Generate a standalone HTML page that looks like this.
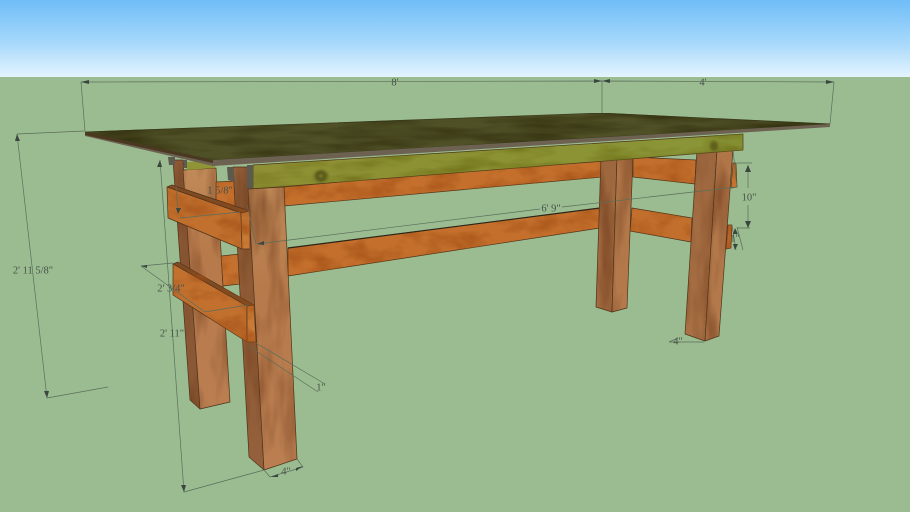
<!DOCTYPE html>
<html><head><meta charset="utf-8"><style>
html,body{margin:0;padding:0;background:#9bbd91}
svg{display:block}
text{font-family:"Liberation Serif",serif;font-size:10.5px;fill:#47524a;text-anchor:middle;dominant-baseline:middle}
.t{stroke:#4b331c;stroke-width:.7;stroke-linejoin:round}
.d{stroke:#5a6e5c;stroke-width:.7;fill:none}
.a{fill:#3a463f}
filter{color-interpolation-filters:sRGB}
</style></head><body>
<svg width="910" height="512" viewBox="0 0 910 512" xmlns="http://www.w3.org/2000/svg">
<defs>
<linearGradient id="sky" x1="0" y1="0" x2="0" y2="1"><stop offset="0" stop-color="#6fbdf8"/><stop offset=".55" stop-color="#a6d8fb"/><stop offset="1" stop-color="#e4f4fe"/></linearGradient>
<linearGradient id="lf" x1="0" y1="0" x2="0" y2="1"><stop offset="0" stop-color="#c08a58"/><stop offset=".35" stop-color="#b77a4b"/><stop offset=".7" stop-color="#b87c4e"/><stop offset="1" stop-color="#ba7e51"/></linearGradient>
<linearGradient id="ls" x1="0" y1="0" x2="0" y2="1"><stop offset="0" stop-color="#95623c"/><stop offset=".5" stop-color="#8c5934"/><stop offset="1" stop-color="#95613c"/></linearGradient>
<linearGradient id="rf" x1="0" y1="0" x2="0" y2="1"><stop offset="0" stop-color="#9c663e"/><stop offset=".5" stop-color="#a56d42"/><stop offset="1" stop-color="#a87044"/></linearGradient>
<linearGradient id="rs" x1="0" y1="0" x2="0" y2="1"><stop offset="0" stop-color="#b07648"/><stop offset="1" stop-color="#b47a4c"/></linearGradient>
<linearGradient id="ap" x1="0" y1="0" x2="1" y2="0"><stop offset="0" stop-color="#8f9035"/><stop offset=".5" stop-color="#8b9233"/><stop offset="1" stop-color="#8a9638"/></linearGradient>
<filter id="b" x="-50%" y="-50%" width="200%" height="200%"><feGaussianBlur stdDeviation="1.4"/></filter>
<filter id="soft" x="0" y="0" width="100%" height="100%"><feGaussianBlur stdDeviation=".35"/></filter>
<filter id="wv" x="-5%" y="-5%" width="110%" height="110%"><feTurbulence type="fractalNoise" baseFrequency=".05 .012" numOctaves="3" seed="7"/><feColorMatrix values="0 0 0 0 .42  0 0 0 0 .22  0 0 0 0 .1  0 0 0 1.4 -.6"/><feComposite in2="SourceAlpha" operator="in" result="g"/><feMerge><feMergeNode in="SourceGraphic"/><feMergeNode in="g"/></feMerge></filter>
<filter id="wh" x="-5%" y="-5%" width="110%" height="110%"><feTurbulence type="fractalNoise" baseFrequency=".035 .06" numOctaves="3" seed="11"/><feColorMatrix values="0 0 0 0 .62  0 0 0 0 .3  0 0 0 0 .08  0 0 0 1.6 -.68"/><feComposite in2="SourceAlpha" operator="in" result="g"/><feMerge><feMergeNode in="SourceGraphic"/><feMergeNode in="g"/></feMerge></filter>
<filter id="wa" x="-5%" y="-5%" width="110%" height="110%"><feTurbulence type="fractalNoise" baseFrequency=".02 .08" numOctaves="3" seed="3"/><feColorMatrix values="0 0 0 0 .42  0 0 0 0 .42  0 0 0 0 .08  0 0 0 1.6 -.65"/><feComposite in2="SourceAlpha" operator="in" result="g"/><feMerge><feMergeNode in="SourceGraphic"/><feMergeNode in="g"/></feMerge></filter>
<filter id="wt" x="-2%" y="-5%" width="104%" height="110%"><feTurbulence type="fractalNoise" baseFrequency=".012 .09" numOctaves="3" seed="4"/><feColorMatrix values="0 0 0 0 .2  0 0 0 0 .19  0 0 0 0 .06  0 0 0 2 -.72"/><feComposite in2="SourceAlpha" operator="in" result="g"/><feMerge><feMergeNode in="SourceGraphic"/><feMergeNode in="g"/></feMerge></filter>
</defs>
<rect width="910" height="77" fill="url(#sky)"/>
<rect y="77" width="910" height="435" fill="#9bbc90"/>

<path class="d" d="M81,82L602,81L834,82M81,82L85,131M602,81V113M834,82L830,124M17,134L85,131M17,134L47,398M47,398L108,387"/>
<polygon class="a" points="81,82 89,80 89,84"/><polygon class="a" points="602,81 594,79 594,83"/><polygon class="a" points="602,81 610,79 610,83"/><polygon class="a" points="834,82 826,80 826,84"/>
<polygon class="a" points="17,134 15,141 20,141"/><polygon class="a" points="47,398 44,391 49,391"/>

<g filter="url(#soft)">
<g filter="url(#wv)">
<polygon class="t" fill="#8a5835" points="173,160 183,160 200,409 190,400"/>
<polygon class="t" fill="url(#lf)" points="183,170 216,168 230,402 200,409"/>
</g>
<polygon fill="#5d5a4e" points="168,157 175,157 175,165 169,165"/>
<polygon fill="#5d5a4e" points="183,160 187,160 187,168 184,168"/>
<polygon fill="#8f9437" points="187,162 215,160 215,168 187,170"/>
<g filter="url(#wh)">
<polygon class="t" fill="#c4702e" points="216,182 236,181 236,207 216,207"/>
<polygon class="t" fill="#c4702e" points="221,256 240,254 240,284 223,286"/>
</g>
<polygon class="t" fill="url(#ls)" filter="url(#wv)" points="233,167 248,167 264,470 249,457"/>
<polygon fill="#5c5a4e" points="227,167 233,167 235,182 228,180"/>

<g filter="url(#wh)">
<polygon class="t" fill="#c26e2c" points="632,208 692,218 691,242 630,231"/>
<polygon class="t" fill="#c26e2c" points="633,157 696,160 695,184 633,177"/>
<polygon class="t" fill="#c97730" points="733,163 736,163 737,187 731,188"/>
<polygon class="t" fill="#c26a28" points="728,225 732,225 731,248 726,249"/>
<polygon class="t" fill="#c46f2c" points="284,187 602,158 602,177 284,206"/>
<polygon class="t" fill="#c46f2c" points="288,248 600,208 600,228 288,276"/>
</g>
<path d="M288,248L600,208" stroke="#2c2518" stroke-width="1.2"/>

<g filter="url(#wv)">
<polygon class="t" fill="url(#rf)" points="601,158 617,158 612,312 596,307"/>
<polygon class="t" fill="url(#rs)" points="617,158 633,157 627,308 612,312"/>
<polygon class="t" fill="url(#rf)" points="697,150 717,150 705,341 685,334"/>
<polygon class="t" fill="url(#rs)" points="717,150 733,149 719,336 705,341"/>
</g>

<polygon class="t" fill="url(#ap)" filter="url(#wa)" points="253,165 743,134 743,150 253,189"/>
<ellipse cx="321" cy="176" rx="8" ry="6" fill="#6b6c20" opacity=".7" filter="url(#b)"/>
<circle cx="321" cy="176" r="4" fill="none" stroke="#4c4c16" stroke-width="2.2" filter="url(#b)"/>
<ellipse cx="714" cy="146" rx="4" ry="5" fill="#5c5c1c" opacity=".9" filter="url(#b)"/>
<rect x="247" y="165" width="6" height="24" fill="#5c5a4e"/>

<polygon class="t" fill="url(#lf)" filter="url(#wv)" points="248,189 284,187 297,459 264,470"/>

<g filter="url(#wh)">
<polygon class="t" fill="#7f4a22" points="167,187 172,185 250,211 241,213"/>
<polygon class="t" fill="#c2702e" points="167,187 241,213 242,249 168,218"/>
<polygon class="t" fill="#c97a35" points="241,213 250,211 250,249 242,249"/>
<polygon class="t" fill="#7f4a22" points="173,264 178,262 254,305 247,306"/>
<polygon class="t" fill="#c2702e" points="173,264 247,306 247,342 173,295"/>
<polygon class="t" fill="#c97a35" points="247,306 254,305 256,342 247,342"/>
</g>

<polygon fill="#4f5026" stroke="#3a3a1e" stroke-width=".7" filter="url(#wt)" points="85,132 600,113 830,124 213,160"/>
<polygon fill="#6d6252" points="85,132 213,160 830,124 830,127 213,166 85,136"/>
<polygon fill="#4a3820" points="85,132 213,160 213,163 85,135"/>
</g>

<path class="d" d="M160,160L184,492L264,470M264,470L270,477L303,467L297,459M141,266L173,263M141,266L205,312L248,305M257,244L540,209M562,207L737,187M256,343L325,384M250,347L318,392M247,205L256,244M678,338L669,342L704,342M733,150L737,187M737,163H752M737,228H750M732,225L736,250M748,165V188M748,205V228M737,227L743,250M176,186L178,213M180,218L240,212"/>
<polygon class="a" points="160,160 157,167 162,167"/><polygon class="a" points="184,492 181,485 186,485"/>
<polygon class="a" points="257,244 264,241 264,245"/>
<polygon class="a" points="748,165 745,172 751,172"/><polygon class="a" points="748,228 745,221 751,221"/>
<polygon class="a" points="735,228 733,234 738,234"/><polygon class="a" points="735,250 733,244 738,244"/>
<polygon class="a" points="278,474 271,477 278,477"/><polygon class="a" points="296,468 303,466 296,471"/>
<polygon class="a" points="141,266 147,265 147,268"/>
<polygon class="a" points="178,214 176,208 181,208"/>

<text x="395" y="83">8'</text><text x="703" y="83">4'</text>
<text x="33" y="271">2' 11 5/8"</text><text x="172" y="334">2' 11"</text>
<text x="171" y="289">2' 3/4"</text><text x="220" y="191">1 5/8"</text>
<text x="551" y="209">6' 9"</text><text x="749" y="198">10"</text>
<text x="735" y="239">1"</text><text x="678" y="342">4"</text>
<text x="286" y="472">4"</text><text x="321" y="388">1"</text>
</svg>
</body></html>
